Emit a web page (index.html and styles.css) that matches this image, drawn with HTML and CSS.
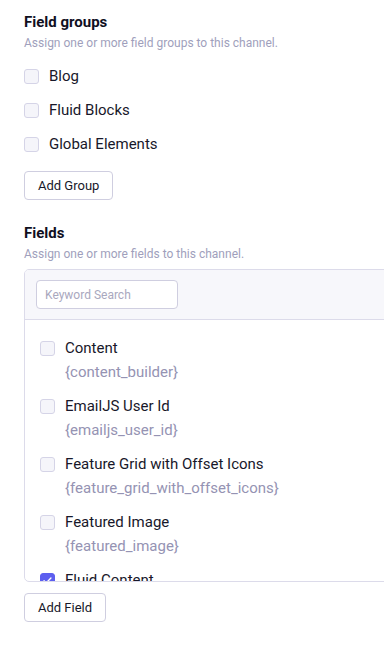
FILE: index.html
```html
<!DOCTYPE html>
<html lang="en">
  <head>
    <meta charset="UTF-8" />
    <meta name="viewport" content="width=device-width, initial-scale=1.0" />
    <title>Channel Fields</title>
    <link rel="stylesheet" href="styles.css">
  </head>
  <body>
    <div class="page">
      <!-- Field groups -->
      <section class="section">
        <h2>Field groups</h2>
        <p class="hint">Assign one or more field groups to this channel.</p>

        <div class="group-list">
          <label class="check-row">
            <span class="box"></span>
            <span>Blog</span>
          </label>
          <label class="check-row">
            <span class="box"></span>
            <span>Fluid Blocks</span>
          </label>
          <label class="check-row">
            <span class="box"></span>
            <span>Global Elements</span>
          </label>
        </div>

        <button class="btn">Add Group</button>
      </section>

      <!-- Fields -->
      <section class="section fields">
        <h2>Fields</h2>
        <p class="hint">Assign one or more fields to this channel.</p>

        <div class="panel">
          <div class="panel-head">
            <input type="text" class="search" placeholder="Keyword Search" />
          </div>
          <div class="panel-list">
            <div class="field-item">
              <span class="box"></span>
              <div class="field-text">
                <div class="field-name">Content</div>
                <div class="field-code">{content_builder}</div>
              </div>
            </div>
            <div class="field-item">
              <span class="box"></span>
              <div class="field-text">
                <div class="field-name">EmailJS User Id</div>
                <div class="field-code">{emailjs_user_id}</div>
              </div>
            </div>
            <div class="field-item">
              <span class="box"></span>
              <div class="field-text">
                <div class="field-name">Feature Grid with Offset Icons</div>
                <div class="field-code">{feature_grid_with_offset_icons}</div>
              </div>
            </div>
            <div class="field-item">
              <span class="box"></span>
              <div class="field-text">
                <div class="field-name">Featured Image</div>
                <div class="field-code">{featured_image}</div>
              </div>
            </div>
            <div class="field-item">
              <span class="box checked">
                <svg viewBox="0 0 16 16" width="11" height="11">
                  <path d="M3 8.5l3 3 7-7" fill="none" stroke="#fff" stroke-width="2" stroke-linecap="round" stroke-linejoin="round" />
                </svg>
              </span>
              <div class="field-text">
                <div class="field-name">Fluid Content</div>
                <div class="field-code">{fluid_content}</div>
              </div>
            </div>
          </div>
        </div>

        <button class="btn btn-field">Add Field</button>
      </section>
    </div>
  </body>
</html>
```

FILE: styles.css
```css
body {
  margin: 0;
  font-family: Roboto, "Liberation Sans", Arial, sans-serif;
  background: #fff;
  color: #1f1f33;
  overflow: hidden;
}

.page {
  padding: 12px 0 0 24px;
}

.section h2 {
  margin: 0 0 3px;
  font-size: 15px;
  line-height: 20px;
  font-weight: 700;
  color: #10101f;
}

.hint {
  margin: 0;
  font-size: 12px;
  line-height: 16px;
  color: #a09fbc;
}

.group-list {
  display: flex;
  flex-direction: column;
  gap: 14px;
  margin-top: 15px;
}

.check-row {
  display: flex;
  align-items: center;
  gap: 10px;
  font-size: 15px;
  line-height: 20px;
  color: #18182a;
}

.box {
  flex: none;
  box-sizing: border-box;
  width: 15px;
  height: 15px;
  border: 1px solid #d5d4e7;
  border-radius: 3px;
  background: #f5f5fa;
  display: flex;
  align-items: center;
  justify-content: center;
}

.box.checked {
  background: #5d5fef;
  border-color: #5d5fef;
}

.btn {
  display: block;
  box-sizing: border-box;
  height: 29px;
  margin-top: 17px;
  padding: 0 13px;
  font-family: inherit;
  font-size: 13px;
  color: #18182a;
  background: #fff;
  border: 1px solid #cfcee0;
  border-radius: 4px;
}

.fields {
  margin-top: 23px;
}

.panel {
  width: 420px;
  margin-top: 7px;
  border: 1px solid #dcdbea;
  border-radius: 5px;
  overflow: hidden;
}

.panel-head {
  background: #f7f7fb;
  padding: 10px 11px;
  border-bottom: 1px solid #dcdbea;
}

.search {
  display: block;
  box-sizing: border-box;
  width: 142px;
  height: 29px;
  padding: 0 8px;
  font-family: inherit;
  font-size: 12px;
  color: #1f1f33;
  background: #fff;
  border: 1px solid #cfcee0;
  border-radius: 4px;
  outline: none;
}

.search::placeholder {
  color: #a9a8be;
}

.panel-list {
  height: 243px;
  padding: 18px 15px 0;
  overflow: hidden;
}

.field-item {
  display: flex;
  gap: 10px;
  margin-bottom: 14px;
}

.field-item .box {
  margin-top: 2.5px;
}

.field-name {
  font-size: 15px;
  line-height: 20px;
  color: #18182a;
}

.field-code {
  margin-top: 4px;
  font-size: 15px;
  line-height: 20px;
  color: #9593b3;
}

.btn-field {
  margin-top: 11px;
}
```
